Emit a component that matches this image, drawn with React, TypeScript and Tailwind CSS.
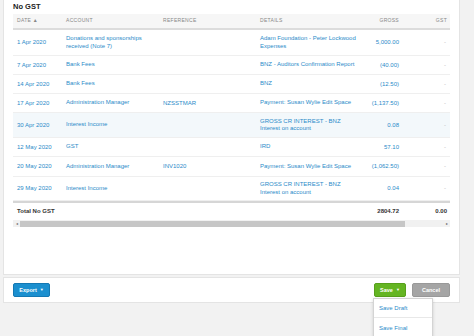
import React from 'react';

type Row = {
  date: string;
  account: string[];
  reference?: string;
  details: string[];
  gross: string;
  h: string;
  hover?: boolean;
};

const rows: Row[] = [
  { date: '1 Apr 2020', account: ['Donations and sponsorships', 'received (Note 7)'], details: ['Adam Foundation - Peter Lockwood', 'Expenses'], gross: '5,000.00', h: 'h-[26px]' },
  { date: '7 Apr 2020', account: ['Bank Fees'], details: ['BNZ - Auditors Confirmation Report'], gross: '(40.00)', h: 'h-[19px]' },
  { date: '14 Apr 2020', account: ['Bank Fees'], details: ['BNZ'], gross: '(12.50)', h: 'h-[19px]' },
  { date: '17 Apr 2020', account: ['Administration Manager'], reference: 'NZSSTMAR', details: ['Payment: Susan Wylie Edit Space'], gross: '(1,137.50)', h: 'h-[19px]' },
  { date: '30 Apr 2020', account: ['Interest Income'], details: ['GROSS CR INTEREST - BNZ', 'Interest on account'], gross: '0.08', h: 'h-[25px]', hover: true },
  { date: '12 May 2020', account: ['GST'], details: ['IRD'], gross: '57.10', h: 'h-[19px]' },
  { date: '20 May 2020', account: ['Administration Manager'], reference: 'INV1020', details: ['Payment: Susan Wylie Edit Space'], gross: '(1,062.50)', h: 'h-[20px]' },
  { date: '29 May 2020', account: ['Interest Income'], details: ['GROSS CR INTEREST - BNZ', 'Interest on account'], gross: '0.04', h: 'h-[24px]' },
];

const cols = 'grid grid-cols-[53px_97px_97px_1fr_33px_47px] items-center';

const Lines: React.FC<{ lines: string[] }> = ({ lines }) => (
  <div className="leading-[7.5px]">
    {lines.map((l) => (
      <div key={l}>{l}</div>
    ))}
  </div>
);

export default function App() {
  return (
    <div className="relative w-[474px] h-[336px] overflow-hidden bg-[#f2f2f2] font-['Liberation_Sans',Arial,sans-serif]">
      <div className="ml-[3px] w-[457px] h-[275px] bg-white border-x border-b border-[#e4e4e4] px-[9px]">
        <div className="h-[14px] flex items-center text-[7.5px] font-bold text-[#222]">No GST</div>

        <div className="w-[437px]">
          <div className={`${cols} h-[16px] bg-[#f6f6f6] border-b-2 border-[#dcdcdc] text-[5px] uppercase tracking-[0.06em] text-[#888]`}>
            <div className="pl-[4px]">Date ▲</div>
            <div>Account</div>
            <div>Reference</div>
            <div>Details</div>
            <div className="text-right pr-[4px]">Gross</div>
            <div className="text-right pr-[3px]">GST</div>
          </div>

          {rows.map((r) => (
            <div
              key={r.date}
              className={`${cols} ${r.h} border-b border-[#efefef] text-[6px] text-[#2a8bc9] ${r.hover ? 'bg-[#f3f8fb]' : ''}`}
            >
              <div className="pl-[4px]">{r.date}</div>
              <Lines lines={r.account} />
              <div>{r.reference ?? ''}</div>
              <Lines lines={r.details} />
              <div className="text-right pr-[4px] whitespace-nowrap">{r.gross}</div>
              <div className="text-right pr-[4px] text-[#bbb]">-</div>
            </div>
          ))}

          <div className={`${cols} h-[19px] border-t-2 border-[#d6d6d6] text-[6px] font-bold text-[#333]`}>
            <div className="pl-[4px] col-span-4">Total No GST</div>
            <div className="text-right pr-[4px]">2804.72</div>
            <div className="text-right pr-[3px]">0.00</div>
          </div>

          <div className="flex items-center h-[7px] bg-[#f1f1f1]">
            <div className="w-[7px] flex justify-center text-[4px] text-[#666]">◂</div>
            <div className="w-[385px] h-[6px] bg-[#c6c6c6]" />
            <div className="flex-1" />
            <div className="w-[7px] flex justify-center text-[4px] text-[#666]">▸</div>
          </div>
        </div>
      </div>

      <div className="ml-[3px] mt-[2px] w-[457px] h-[26px] bg-white border border-[#e4e4e4] flex items-center justify-between px-[9px]">
        <button className="w-[37px] h-[14px] rounded-[2px] bg-[#1b8fcf] border border-[#1478b3] text-white text-[5.5px] font-bold flex items-center justify-center gap-[3px]">
          Export <span className="text-[4px]">▼</span>
        </button>
        <div className="flex gap-[6px]">
          <button className="w-[32px] h-[14px] rounded-[2px] bg-[#64b522] border border-[#57a01c] text-white text-[5.5px] font-bold flex items-center justify-center gap-[3px]">
            Save <span className="text-[4px]">▼</span>
          </button>
          <button className="w-[38px] h-[14px] rounded-[2px] bg-[#a5a5a5] border border-[#999] text-white text-[5.5px] font-bold flex items-center justify-center">
            Cancel
          </button>
        </div>
      </div>

      <div className="absolute left-[373px] top-[298px] w-[60px] h-[44px] bg-white border border-[#d4d4d4] shadow-[0_1px_3px_rgba(0,0,0,0.15)] text-[6px] text-[#2a8bc9]">
        <div className="h-[19px] flex items-center pl-[5px] border-b border-[#e8e8e8]">Save Draft</div>
        <div className="h-[20px] flex items-center pl-[5px]">Save Final</div>
      </div>
    </div>
  );
}
